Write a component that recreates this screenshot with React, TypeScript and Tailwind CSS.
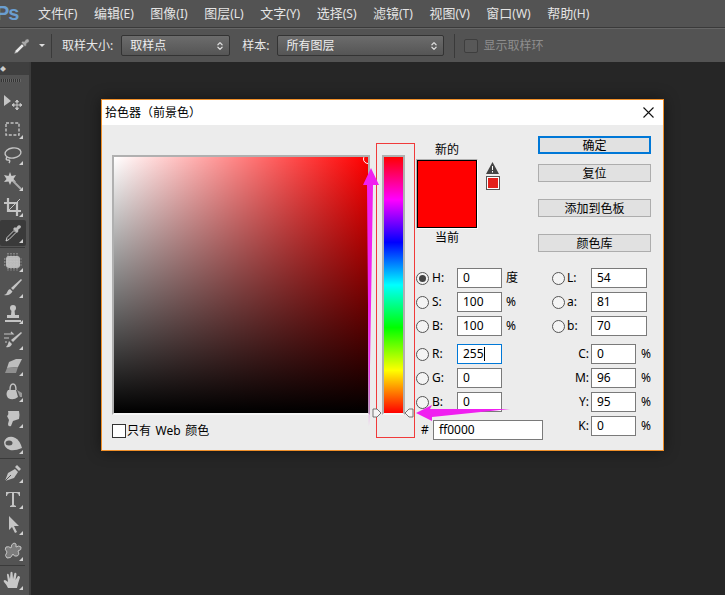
import type { ReactNode } from "react";
import { ChevronsUpDown } from "lucide-react";

const uiFont = "font-['Noto_Sans','Noto_Sans_CJK_SC',sans-serif]";

const menus = [
  ["文件", "(F)"],
  ["编辑", "(E)"],
  ["图像", "(I)"],
  ["图层", "(L)"],
  ["文字", "(Y)"],
  ["选择", "(S)"],
  ["滤镜", "(T)"],
  ["视图", "(V)"],
  ["窗口", "(W)"],
  ["帮助", "(H)"],
];

function Eyedropper() {
  return (
    <svg width="16" height="16" viewBox="0 0 16 16">
      <path d="M0.5 15.5 L1.5 12.5 L8 6 L10 8 L3.5 14.5 Z" fill="#e8e8e8" stroke="#777" strokeWidth="0.6" />
      <path d="M7.5 4.5 L9 3 L10 4 L12 1.5 Q13.5 0.5 15 2 Q15.5 3.5 14 4.5 L12 6 L12.5 7 L11 8.5 Z" fill="#a8a8a8" stroke="#666" strokeWidth="0.4" />
    </svg>
  );
}

const toolIcons: { id: string; icon: ReactNode; corner?: boolean; active?: boolean; sepAfter?: boolean }[] = [
  {
    id: "move",
    corner: false,
    icon: (
      <g>
        <path d="M1 2 L1 13 L8 8 Z" fill="#c4c4c4" />
        <path d="M14 7 V17 M9 12 H19 M14 7 l-1.5 2 h3 Z M14 17 l-1.5 -2 h3 Z M9 12 l2 -1.5 v3 Z M19 12 l-2 -1.5 v3 Z" stroke="#c4c4c4" strokeWidth="1" fill="#c4c4c4" />
      </g>
    ),
  },
  {
    id: "marquee",
    icon: <rect x="3" y="4" width="13" height="12" fill="none" stroke="#c4c4c4" strokeWidth="1.4" strokeDasharray="3 1.6" />,
  },
  {
    id: "lasso",
    icon: (
      <g fill="none" stroke="#c4c4c4" strokeWidth="1.4">
        <ellipse cx="10" cy="8" rx="8" ry="5" transform="rotate(-8 10 8)" />
        <path d="M4 12 Q2 15 5 15 Q8 15 6 18" />
      </g>
    ),
  },
  {
    id: "wand",
    icon: (
      <g>
        <path d="M7 1 L8.5 5 L13 4 L10.5 8 L13 11 L8.5 10.5 L7 14 L5.5 10.5 L1 11 L3.5 8 L1 4 L5.5 5 Z" fill="#c8c8c8" />
        <path d="M10 10 L18 18" stroke="#aaa" strokeWidth="2" />
      </g>
    ),
  },
  {
    id: "crop",
    icon: (
      <g fill="none" stroke="#c4c4c4" strokeWidth="2.2">
        <path d="M1 6 H14 V19 M5 1 V14 H18" />
        <path d="M6 13 L17 2" strokeWidth="1" />
      </g>
    ),
  },
  {
    id: "eyedropper",
    active: true,
    sepAfter: true,
    icon: (
      <g>
        <path d="M3 18 L4 14.5 L11 7.5 L13 9.5 L6 16.5 Z" fill="#3a3a3a" stroke="#ddd" strokeWidth="0.9" />
        <path d="M10 6 L12 4 L13 5 L15 2.5 Q17 1.5 18 3.5 Q18 5 16 6 L15 7 L15.5 8 L14 10 Z" fill="#bbb" />
      </g>
    ),
  },
  {
    id: "heal",
    icon: (
      <g>
        <rect x="3" y="4" width="14" height="12" rx="3" fill="#b8b8b8" />
        <path d="M5 1 V19 M8 1 V19 M11 1 V19 M14 1 V19 M1 7 H19 M1 10 H19 M1 13 H19" stroke="#c4c4c4" strokeWidth="0.8" strokeDasharray="1.5 1" />
      </g>
    ),
  },
  {
    id: "brush",
    icon: (
      <g fill="#c4c4c4">
        <path d="M18 1 L19 2 L10 12 L8 10 Z" />
        <path d="M7 11 L9.5 13.5 Q7 18 1 17 Q4 16 4.5 13.5 Q5 11.5 7 11 Z" />
      </g>
    ),
  },
  {
    id: "stamp",
    icon: (
      <g fill="#c4c4c4">
        <circle cx="10" cy="4" r="3" />
        <path d="M8.5 6 H11.5 L12 11 H16 V14 H4 V11 H8 Z" />
        <rect x="2" y="16" width="16" height="2" />
      </g>
    ),
  },
  {
    id: "history",
    icon: (
      <g fill="#c4c4c4">
        <path d="M18 2 L19 3 L10 12 L8 10 Z" />
        <path d="M6 11 L9 14 Q7 18 3 17 Q5 15 6 11 Z" />
        <path d="M1 4 H10 L8 2 M1 8 H6 M2 12 H4" stroke="#c4c4c4" strokeWidth="1.2" fill="none" />
      </g>
    ),
  },
  {
    id: "eraser",
    icon: (
      <g>
        <path d="M6 6 L13 3 H19 L15 11 L4 12 Z" fill="#bdbdbd" />
        <path d="M4 12 L2 17 H13 L15 11 Z" fill="#8f8f8f" />
      </g>
    ),
  },
  {
    id: "bucket",
    icon: (
      <g>
        <path d="M5 8 L13 8 L15 15 Q10 19 5 16 Q2 12 5 8 Z" fill="#c4c4c4" />
        <path d="M7 8 Q7 2 10 2 Q13 2 13 8" stroke="#c4c4c4" strokeWidth="1.4" fill="none" />
        <path d="M14 8 L19 11 V15 L17 15 Z" fill="#9a9a9a" />
      </g>
    ),
  },
  {
    id: "smudge",
    icon: <path d="M5 3 H16 Q17 7 16 11 L10 13 L8 18 Q5 19 5 16 L6 12 L4 8 Q6 7 5 3 Z" fill="#c4c4c4" />,
  },
  {
    id: "dodge",
    sepAfter: true,
    icon: (
      <g>
        <path d="M1 8 Q3 2 10 3 Q15 4 18 11 L19 14 Q12 17 7 16 Q1 14 1 8 Z" fill="#c4c4c4" />
        <ellipse cx="6" cy="9" rx="3.5" ry="2.5" fill="#555" />
      </g>
    ),
  },
  {
    id: "pen",
    icon: (
      <g>
        <path d="M2 18 L5 10 L12 6 L15 9 L11 15 Z" fill="#c4c4c4" />
        <path d="M12 4 L14 2 L18 6 L16 8 Z" fill="#c4c4c4" />
        <path d="M2 18 L8 12" stroke="#555" strokeWidth="1" />
      </g>
    ),
  },
  {
    id: "type",
    icon: <path d="M3 3 H17 V7 H16 Q15.5 4 13 4 H11 V16 L13 17 V18 H7 V17 L9 16 V4 H7 Q4.5 4 4 7 H3 Z" fill="#c4c4c4" />,
  },
  {
    id: "path",
    icon: <path d="M6 1 L6 15 L9 12 L12 18 L14 17 L11 11 L16 11 Z" fill="#c4c4c4" />,
  },
  {
    id: "shape",
    sepAfter: true,
    icon: (
      <path
        d="M11 2 Q14 2 13 6 Q16 4 18 6 Q19 9 15 10 Q17 14 14 15 Q11 16 10 13 Q8 18 4 17 Q1 15 4 11 Q1 8 3 6 Q6 5 8 7 Q8 3 11 2 Z"
        fill="#7c7c7c"
        stroke="#c4c4c4"
        strokeWidth="1"
      />
    ),
  },
  {
    id: "hand",
    corner: true,
    icon: (
      <path
        d="M5 18 Q3 14 1 12 Q0 10 2 10 Q4 11 5 12 L4 5 Q4 3 5.5 4 L7 9 L7.5 2.5 Q8.5 1 9.5 2.5 L10 9 L11.5 3 Q13 2 13.5 4 L12.5 10 L15 6 Q17 5.5 17 7.5 Q15 13 14 18 Z"
        fill="#c8c8c8"
      />
    ),
  },
];

function ToolButton({ icon, active, corner = true }: { icon: ReactNode; active?: boolean; corner?: boolean }) {
  return (
    <div className={`relative flex h-[26px] w-[26px] items-center justify-center rounded-[2px] ${active ? "bg-[#3a3a3a]" : ""}`}>
      <svg width="20" height="20" viewBox="0 0 20 20">
        {icon}
      </svg>
      {corner && (
        <span className="absolute bottom-[3px] right-[3px] h-0 w-0 border-b-[4px] border-l-[4px] border-b-[#d0d0d0] border-l-transparent" />
      )}
    </div>
  );
}

function ToolPanel() {
  return (
    <div className="flex w-[31px] shrink-0 flex-col border-r-2 border-[#3c3c3c] bg-[#535353]">
      <div className="flex h-[13px] items-center bg-[#3f3f3f]">
        <span className="text-[6px] leading-none text-[#ccc]">◆</span>
      </div>
      <div className="mx-[1px] mt-[4px] h-[3px] w-[20px] bg-[repeating-linear-gradient(to_right,#333_0,#333_1px,#666_1px,#666_2px)]" />
      <div className="mt-[8px] flex flex-col">
        {toolIcons.map((tool) => (
          <div key={tool.id}>
            <ToolButton icon={tool.icon} active={tool.active} corner={tool.corner} />
            {tool.sepAfter && <div className="my-[1px] h-px w-[25px] bg-[#3a3a3a]" />}
          </div>
        ))}
      </div>
    </div>
  );
}

function Select({ value, className }: { value: string; className: string }) {
  return (
    <div className={`flex h-[21px] items-center justify-between rounded-[2px] border border-[#333] bg-[linear-gradient(to_bottom,#6c6c6c,#555)] pl-2 pr-1 text-[12px] text-[#eee] ${className}`}>
      <span>{value}</span>
      <ChevronsUpDown size={10} strokeWidth={3} className="text-[#ddd]" />
    </div>
  );
}

function Radio({ checked }: { checked?: boolean }) {
  return (
    <span className="flex h-[13px] w-[13px] shrink-0 items-center justify-center rounded-full border border-[#555] bg-[#f4f4f4]">
      {checked && <span className="h-[7px] w-[7px] rounded-full bg-[#444]" />}
    </span>
  );
}

function Field({ value, className = "w-[45px]", focused }: { value: string; className?: string; focused?: boolean }) {
  return (
    <div className={`flex h-[20px] items-center border bg-white pl-[5px] text-[12px] leading-none text-black ${focused ? "border-[#0078d7]" : "border-[#7a7a7a]"} ${className}`}>
      {value}
      {focused && <span className="h-[14px] w-px bg-black" />}
    </div>
  );
}

function HsbRow({ label, value, unit, checked, focused }: { label: string; value: string; unit?: string; checked?: boolean; focused?: boolean }) {
  return (
    <div className="flex h-[20px] items-center">
      <Radio checked={checked} />
      <span className="ml-[3px] w-[25px] text-[12px]">{label}</span>
      <Field value={value} focused={focused} />
      {unit && <span className="ml-[4px] text-[12px]">{unit}</span>}
    </div>
  );
}

function LabRow({ label, value }: { label: string; value: string }) {
  return (
    <div className="ml-[14px] flex h-[20px] items-center">
      <Radio />
      <span className="ml-[2px] w-[24px] text-[12px]">{label}</span>
      <Field value={value} className="w-[56px]" />
    </div>
  );
}

function CmykRow({ label, value }: { label: string; value: string }) {
  return (
    <div className="flex h-[20px] items-center">
      <span className="w-[50px] pr-[2px] text-right text-[12px]">{label}</span>
      <Field value={value} />
      <span className="ml-[5px] text-[12px]">%</span>
    </div>
  );
}

function DialogButton({ children, primary }: { children: ReactNode; primary?: boolean }) {
  return (
    <div className={`flex h-[18px] w-[113px] items-center justify-center bg-[#e1e1e1] pt-[1px] text-[12px] leading-none text-black ${primary ? "border-2 border-[#0078d7]" : "border border-[#adadad]"}`}>
      {children}
    </div>
  );
}

function ColorPicker() {
  return (
    <div className="absolute left-[101px] top-[99px] w-[563px] border border-[#f0902a] bg-[#ececec] text-black shadow-[0_0_14px_rgba(0,0,0,0.45)]">
      <div className="flex h-[25px] items-center justify-between bg-white pl-[3px] pr-[9px]">
        <span className="text-[12px]">拾色器（前景色）</span>
        <svg width="11" height="11" viewBox="0 0 11 11">
          <path d="M0.5 0.5 L10.5 10.5 M10.5 0.5 L0.5 10.5" stroke="#111" strokeWidth="1.1" />
        </svg>
      </div>

      <div className="relative flex h-[325px] items-start pl-[10px] pt-[11px]">
        <div className="mt-[19px] w-[258px]">
          <div className="h-[260px] border-x-2 border-b-2 border-t-2 border-x-[#b0b0b0] border-b-[#f6f6f6] border-t-[#b0b0b0]">
            <div className="relative h-full overflow-hidden bg-[linear-gradient(to_bottom,transparent,#000),linear-gradient(to_right,#fff,#f00)]">
              <span className="absolute right-[-5px] top-[-3px] h-[10px] w-[10px] rounded-full border border-white" />
            </div>
          </div>
          <div className="mt-[7px] flex items-center">
            <span className="h-[14px] w-[14px] border border-[#333] bg-white" />
            <span className="ml-[1px] text-[12px] [word-spacing:1.5px]">只有 Web 颜色</span>
          </div>
        </div>

        <div className="ml-[12px] mt-[19px] h-[260px] w-[23px] border-x-2 border-b-2 border-t-2 border-x-[#b0b0b0] border-b-[#f6f6f6] border-t-[#b0b0b0]">
          <div className="h-full bg-[linear-gradient(to_bottom,#f00,#f0f,#00f,#0ff,#0f0,#ff0,#f00)]" />
        </div>

        <div className="ml-[11px] w-[122px] shrink-0">
          <div className="flex h-[23px] w-[62px] items-center justify-center pt-[5px] text-[12px]">新的</div>
          <div className="flex items-start">
            <div className="h-[70px] w-[62px] border border-b-white border-l-[#b0b0b0] border-r-white border-t-[#b0b0b0]">
              <div className="h-full border border-black bg-[#f00]" />
            </div>
            <div className="ml-[8px] mt-[3px] flex flex-col items-start">
              <svg width="13" height="12" viewBox="0 0 13 12">
                <path d="M6.5 0 L13 12 H0 Z" fill="#444" />
                <path d="M6 4 H7 V8 H6 Z M6 9 H7 V10.5 H6 Z" fill="#fff" />
              </svg>
              <span className="mt-[2px] h-[14px] w-[14px] border border-[#555] bg-[#e3201b] outline outline-1 -outline-offset-2 outline-white" />
            </div>
          </div>
          <div className="flex h-[18px] w-[62px] items-center justify-center text-[12px]">当前</div>

          <div className="mt-[21px] flex flex-col gap-[4px]">
            <HsbRow label="H:" value="0" unit="度" checked />
            <HsbRow label="S:" value="100" unit="%" />
            <HsbRow label="B:" value="100" unit="%" />
          </div>
          <div className="mt-[8px] flex flex-col gap-[4px]">
            <HsbRow label="R:" value="255" focused />
            <HsbRow label="G:" value="0" />
            <HsbRow label="B:" value="0" />
          </div>
          <div className="mt-[8px] flex h-[20px] items-center">
            <span className="w-[17px] shrink-0 pl-[5px] text-[12px]">#</span>
            <Field value="ff0000" className="w-[110px] shrink-0" />
          </div>
        </div>

        <div className="w-[113px]">
          <DialogButton primary>确定</DialogButton>
          <div className="mt-[10px]">
            <DialogButton>复位</DialogButton>
          </div>
          <div className="mt-[17px]">
            <DialogButton>添加到色板</DialogButton>
          </div>
          <div className="mt-[17px]">
            <DialogButton>颜色库</DialogButton>
          </div>
          <div className="mt-[16px] flex flex-col gap-[4px]">
            <LabRow label="L:" value="54" />
            <LabRow label="a:" value="81" />
            <LabRow label="b:" value="70" />
          </div>
          <div className="mt-[8px] flex flex-col gap-[4px] pl-[3px]">
            <CmykRow label="C:" value="0" />
            <CmykRow label="M:" value="96" />
            <CmykRow label="Y:" value="95" />
            <CmykRow label="K:" value="0" />
          </div>
        </div>

        {/* annotations sit over the dialog body, coordinates are body-relative */}
        <svg className="pointer-events-none absolute left-0 top-0" width="561" height="325" viewBox="0 0 561 325">
          <rect x="274.5" y="18.5" width="38" height="294" fill="none" stroke="#f03a3a" strokeWidth="1" />
          <path d="M271 284 H275 L279 288 L275 292 H271 Z M311 284 H307 L303 288 L307 292 H311 Z" fill="#f4f4f4" stroke="#555" strokeWidth="0.8" />
          <path d="M269 43 L277 60 L271 60 L267 301 L265 60 L261 60 Z" fill="#f01ff0" />
          <path d="M314 288 L330 280 L328 284 L408 284 L330 292 L330 296 Z" fill="#f01ff0" />
        </svg>
      </div>
    </div>
  );
}

export default function App() {
  return (
    <div className={`relative flex h-[595px] w-[725px] flex-col overflow-hidden bg-[#262626] ${uiFont}`}>
      <div className="flex h-[28px] items-center border-b border-[#3a3a3a] bg-[#535353] text-[13px] text-[#e4e4e4]">
        <span className="w-[38px] pb-[1px] font-['Liberation_Sans',sans-serif] text-[20px] font-bold leading-none tracking-tighter text-[#6a9ed0] [text-indent:-4px]">
          Ps
        </span>
        <div className="flex gap-[16.5px]">
          {menus.map(([name, key]) => (
            <span key={name}>
              {name}
              <span className="text-[12px]">{key}</span>
            </span>
          ))}
        </div>
      </div>

      <div className="flex h-[34px] items-center border-t border-[#666] bg-[#535353] text-[12px] text-[#e8e8e8]">
        <div className="ml-[14px]">
          <Eyedropper />
        </div>
        <span className="ml-[9px] h-0 w-0 border-x-[3px] border-t-[3px] border-x-transparent border-t-[#ddd]" />
        <span className="ml-[6px] h-[24px] w-px bg-[#3a3a3a]" />
        <span className="ml-[10px]">取样大小:</span>
        <Select value="取样点" className="ml-[8px] w-[109px]" />
        <span className="ml-[12px]">样本:</span>
        <Select value="所有图层" className="ml-[8px] w-[167px]" />
        <span className="ml-[10px] h-[24px] w-px bg-[#3a3a3a]" />
        <span className="ml-[9px] h-[14px] w-[14px] rounded-[2px] border border-[#3e3e3e] bg-[#585858]" />
        <span className="ml-[5px] text-[#8e8e8e]">显示取样环</span>
      </div>

      <div className="flex min-h-0 flex-1">
        <ToolPanel />
        <div className="flex-1 bg-[#262626]" />
      </div>

      <ColorPicker />
    </div>
  );
}
